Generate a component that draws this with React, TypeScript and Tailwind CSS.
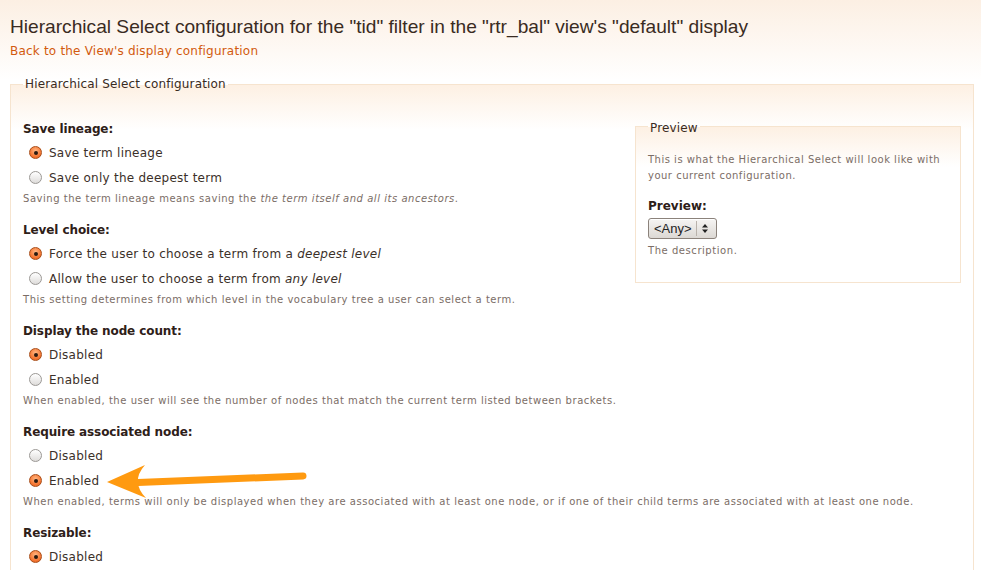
import React from 'react';

type Opt = { label: React.ReactNode; checked?: boolean };

function Radio({ checked }: { checked?: boolean }) {
  if (checked) {
    return (
      <span className="ml-[6px] mr-[7px] flex h-[13px] w-[13px] shrink-0 items-center justify-center rounded-full border border-[#a94d18] bg-[radial-gradient(circle_at_50%_35%,#ffb784,#f77a36_60%,#dc5a1c)]">
        <span className="h-[4px] w-[4px] rounded-full bg-[#2b1a10]" />
      </span>
    );
  }
  return (
    <span className="ml-[6px] mr-[7px] h-[13px] w-[13px] shrink-0 rounded-full border border-[#9b9895] bg-[linear-gradient(#ffffff,#dedcda)]" />
  );
}

function Section({ title, options, desc }: { title: string; options: Opt[]; desc?: React.ReactNode }) {
  return (
    <div className="mb-[15px]">
      <div className="mb-[2px] text-[12px] font-bold leading-[18px] tracking-[-0.1px] text-[#2e2018]">{title}</div>
      {options.map((o, i) => (
        <div key={i} className="flex h-[25px] items-center text-[12px] tracking-[0.25px] text-[#3b3029]">
          <Radio checked={o.checked} />
          <span>{o.label}</span>
        </div>
      ))}
      {desc && <div className="mt-[2px] text-[10px] leading-[14px] tracking-[0.53px] text-[#7b6d66]">{desc}</div>}
    </div>
  );
}

function PreviewSelect() {
  return (
    <div className="mt-[3px] flex h-[21px] w-[69px] items-center rounded-[3px] border border-[#8b827b] bg-[linear-gradient(#f6f5f3,#dcd8d4)] shadow-[inset_0_1px_0_#fff]">
      <span className="pl-[5px] pr-[4px] font-['Liberation_Sans',sans-serif] text-[13px] text-[#222]">&lt;Any&gt;</span>
      <span className="h-[15px] w-px bg-[#b9b2ab]" />
      <svg width="14" height="13" viewBox="0 0 14 13" className="ml-[1px]">
        <path d="M4 5.5 L7 2 L10 5.5 Z" fill="#222" />
        <path d="M4 7.5 L7 11 L10 7.5 Z" fill="#222" />
      </svg>
    </div>
  );
}

export default function App() {
  const sections = [
    {
      title: 'Save lineage:',
      options: [{ label: 'Save term lineage', checked: true }, { label: 'Save only the deepest term' }],
      desc: (
        <>
          Saving the term lineage means saving the <em>the term itself and all its ancestors</em>.
        </>
      ),
    },
    {
      title: 'Level choice:',
      options: [
        { label: <>Force the user to choose a term from a <em>deepest level</em></>, checked: true },
        { label: <>Allow the user to choose a term from <em>any level</em></> },
      ],
      desc: 'This setting determines from which level in the vocabulary tree a user can select a term.',
    },
    {
      title: 'Display the node count:',
      options: [{ label: 'Disabled', checked: true }, { label: 'Enabled' }],
      desc: 'When enabled, the user will see the number of nodes that match the current term listed between brackets.',
    },
    {
      title: 'Require associated node:',
      options: [{ label: 'Disabled' }, { label: 'Enabled', checked: true }],
      desc: 'When enabled, terms will only be displayed when they are associated with at least one node, or if one of their child terms are associated with at least one node.',
    },
    {
      title: 'Resizable:',
      options: [{ label: 'Disabled', checked: true }],
    },
  ];

  return (
    <div className="relative min-h-[570px] overflow-hidden bg-[linear-gradient(#fcefe3,#ffffff_80px)] pl-[10px] pr-[7px] pt-[15px] font-['DejaVu_Sans',sans-serif]">
      <h1 className="font-['Liberation_Sans',sans-serif] text-[19.15px] leading-[24px] text-[#3a2b22]">
        Hierarchical Select configuration for the "tid" filter in the "rtr_bal" view's "default" display
      </h1>
      <a href="#" className="mt-[4px] block text-[12px] leading-[16px] tracking-[0.2px] text-[#d25a0e]">
        Back to the View's display configuration
      </a>

      <fieldset className="mt-[16px] border border-[#f6e4cf] bg-[linear-gradient(#fdf0e3,#ffffff_45px)] px-[12px] pb-[40px] pt-[27px]">
        <legend className="px-[2px] text-[12px] leading-[18px] tracking-[0.15px] text-[#3a2b22]">Hierarchical Select configuration</legend>

        <fieldset className="float-right ml-[12px] mt-[-3px] w-[326px] border border-[#f6e4cf] bg-[linear-gradient(#fdf0e3,#ffffff_40px)] px-[12px] pb-[24px]">
          <legend className="px-[2px] pt-[3px] text-[12px] leading-[16px] tracking-[0.15px] text-[#3a2b22]">Preview</legend>
          <p className="mt-[16px] text-[10px] leading-[16px] tracking-[0.5px] text-[#7b6d66]">
            This is what the Hierarchical Select will look like with
            <br />
            your current configuration.
          </p>
          <div className="mt-[13px] text-[12px] font-bold leading-[18px] text-[#2e2018]">Preview:</div>
          <PreviewSelect />
          <div className="mt-[5px] text-[10px] leading-[14px] tracking-[0.55px] text-[#7b6d66]">The description.</div>
        </fieldset>

        {sections.map((s) => (
          <Section key={s.title} title={s.title} options={s.options} desc={s.desc} />
        ))}
      </fieldset>

      <svg className="pointer-events-none absolute left-[100px] top-[460px]" width="212" height="44" viewBox="100 460 212 44">
        <path d="M303 476 L138 482.5" stroke="#ff9a10" strokeWidth="7" strokeLinecap="round" fill="none" />
        <path d="M107 482 L145 465 Q137 474 138 482 Q138 490 146 498 Z" fill="#ff9a10" />
      </svg>
    </div>
  );
}
